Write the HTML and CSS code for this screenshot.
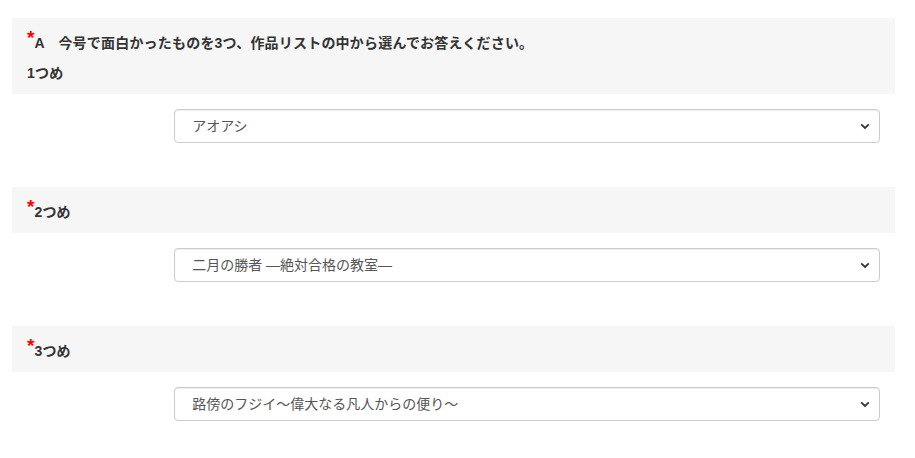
FILE: index.html
```html
<!DOCTYPE html>
<html lang="ja">
<head>
<meta charset="utf-8">
<title>アンケート</title>
<link rel="stylesheet" href="styles.css">
</head>
<body>
<div class="survey">
  <div class="question">
    <div class="q-head">
      <p class="q-title"><span class="req">*</span>A　今号で面白かったものを3つ、作品リストの中から選んでお答えください。</p>
      <p class="q-sub">1つめ</p>
    </div>
    <div class="q-body">
      <div class="select-wrap">
        <select class="form-select">
          <option>アオアシ</option>
        </select>
        <svg class="chev" width="10" height="7" viewBox="0 0 10 7"><path d="M1.2 1.4 L5 5 L8.8 1.4" fill="none" stroke="#333" stroke-width="1.8"/></svg>
      </div>
    </div>
  </div>
  <div class="question">
    <div class="q-head">
      <p class="q-sub"><span class="req">*</span>2つめ</p>
    </div>
    <div class="q-body">
      <div class="select-wrap">
        <select class="form-select">
          <option>二月の勝者 ―絶対合格の教室―</option>
        </select>
        <svg class="chev" width="10" height="7" viewBox="0 0 10 7"><path d="M1.2 1.4 L5 5 L8.8 1.4" fill="none" stroke="#333" stroke-width="1.8"/></svg>
      </div>
    </div>
  </div>
  <div class="question">
    <div class="q-head">
      <p class="q-sub"><span class="req">*</span>3つめ</p>
    </div>
    <div class="q-body">
      <div class="select-wrap">
        <select class="form-select">
          <option>路傍のフジイ〜偉大なる凡人からの便り〜</option>
        </select>
        <svg class="chev" width="10" height="7" viewBox="0 0 10 7"><path d="M1.2 1.4 L5 5 L8.8 1.4" fill="none" stroke="#333" stroke-width="1.8"/></svg>
      </div>
    </div>
  </div>
</div>
</body>
</html>
```
FILE: styles.css
```css
html, body {
  margin: 0;
  padding: 0;
  background: #fff;
}
body {
  font-family: "Liberation Sans", "Noto Sans CJK JP", sans-serif;
  font-size: 14px;
  color: #333;
}
.survey {
  padding: 18px 20px 0 12px;
  display: flex;
  flex-direction: column;
  gap: 44px;
}
.question {
  display: flex;
  flex-direction: column;
  gap: 15px;
}
.q-head {
  background: #f6f6f6;
  padding: 15px 15px 11px;
}
.q-head p {
  margin: 0;
  font-weight: bold;
  line-height: 20px;
  letter-spacing: 0.2px;
}
.q-title {
  margin-bottom: 10px !important;
}
.req {
  color: #ff0000;
  font-size: 19px;
  font-weight: bold;
  vertical-align: 4px;
  line-height: 0;
  letter-spacing: 0;
}
.q-body {
  padding: 0 15px 0 calc(16.6667% + 15px);
}
.select-wrap {
  position: relative;
}
.form-select {
  display: block;
  width: 100%;
  height: 34px;
  padding: 0 30px 0 17px;
  border: 1px solid #ccc;
  border-radius: 4px;
  background: #fff;
  color: #555;
  font-family: "Liberation Sans", "Noto Sans CJK JP", sans-serif;
  font-size: 14px;
  -webkit-appearance: none;
  appearance: none;
  box-shadow: inset 0 1px 1px rgba(0,0,0,0.075);
}
.chev {
  position: absolute;
  right: 10px;
  top: 14px;
  pointer-events: none;
}
```
